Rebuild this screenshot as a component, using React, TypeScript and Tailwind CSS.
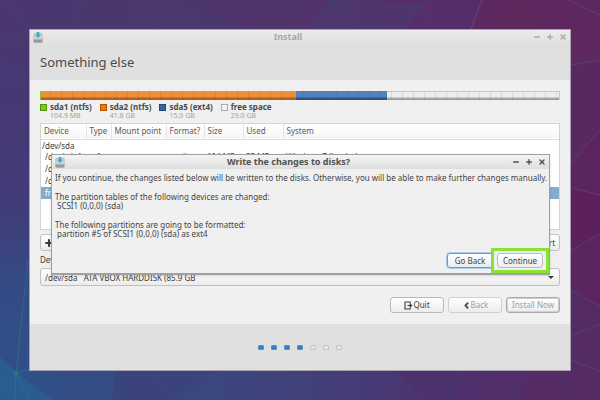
import React from 'react';
import { ChevronLeft, Minus, Plus, X } from 'lucide-react';

interface Partition {
  name: string;
  type: string;
  size: string;
  used: string;
  system: string;
  selected?: boolean;
}

const LEGEND = [
  { name: 'sda1 (ntfs)', size: '104.9 MB', color: 'bg-[#73d216]' },
  { name: 'sda2 (ntfs)', size: '41.8 GB', color: 'bg-[#f57900]' },
  { name: 'sda5 (ext4)', size: '15.0 GB', color: 'bg-[#3465a4]' },
  { name: 'free space', size: '29.0 GB', color: 'bg-[#f4f4f4]' },
];

const PARTITIONS: Partition[] = [
  { name: '/dev/sda1', type: 'ntfs', size: '104 MB', used: '35 MB', system: 'Windows 7 (loader)' },
  { name: '/dev/sda2', type: '', size: '', used: '', system: '' },
  { name: '/dev/sda5', type: '', size: '', used: '', system: '' },
  { name: 'free space', type: '', size: '', used: '', system: '', selected: true },
];

const STEPS = [true, true, true, true, false, false, false];

const BUTTON = 'flex items-center justify-center rounded-[3px] border bg-linear-to-b from-white to-[#ececec]';

function Wallpaper() {
  return (
    <svg
      className="absolute inset-0 h-full w-full"
      viewBox="0 0 600 400"
      preserveAspectRatio="none"
      aria-hidden="true"
    >
      <defs>
        <linearGradient id="base" x1="0" y1="0" x2="1" y2="0">
          <stop offset="0" stopColor="#47376f" />
          <stop offset="0.5" stopColor="#50346b" />
          <stop offset="0.9" stopColor="#5c2861" />
          <stop offset="1" stopColor="#5b245e" />
        </linearGradient>
        <linearGradient id="low" x1="0" y1="0" x2="1" y2="0">
          <stop offset="0" stopColor="#2e5189" />
          <stop offset="0.5" stopColor="#41417a" />
          <stop offset="0.8" stopColor="#502f6b" />
          <stop offset="1" stopColor="#552a66" />
        </linearGradient>
        <linearGradient id="left" x1="0" y1="0" x2="0" y2="1">
          <stop offset="0" stopColor="#4b3570" />
          <stop offset="0.5" stopColor="#423b77" />
          <stop offset="0.72" stopColor="#344b85" />
          <stop offset="1" stopColor="#2f5188" />
        </linearGradient>
      </defs>
      <rect width="600" height="400" fill="url(#base)" />
      <path d="M0 0H40V400H0Z" fill="url(#left)" />
      <path d="M29 365H580L600 400H0Z" fill="url(#low)" />
      <path d="M183 0H0V60L29 74V29H250Z" fill="#4c376f" opacity="0.5" />
      <path d="M330 0L422 5L406 29H310Z" fill="#4c3872" opacity="0.6" />
      <path d="M430 0H482L470 29H405Z" fill="#552f6d" opacity="0.7" />
      <path d="M482 0H600V60L571 65V29H470Z" fill="#60285f" opacity="0.8" />
      <path d="M571 65L600 60V130L571 163Z" fill="#592861" />
      <path d="M571 188L600 195V234L571 250Z" fill="#5c205d" />
      <path d="M571 290L600 305V400H520Z" fill="#552b65" />
      <path d="M0 358L16 373L50 400H0Z" fill="#295c91" />
      <path d="M116 371H214L178 400H112Z" fill="#3b437d" />
      <path d="M397 371H460L450 400H425Z" fill="#4c316d" />
      <g fill="none" stroke="#3b4779" strokeWidth="1" opacity="0.6">
        <path d="M0 62L28 75M6 0L30 32M80 0L73 29M330 0L312 29M330 0L346 29M330 0L422 5L431 0M422 5L406 29M422 5L429 29" />
        <path d="M482 0L471 29" stroke="#54619a" />
        <path d="M568 0L600 15M571 65L600 60M571 163L600 130M571 188L600 195M571 250L600 234M571 290L600 306M571 336L600 324M571 360L600 371" stroke="#4d5488" />
        <path d="M116 371L112 400M145 371L178 400M213 371V400M397 371L398 400M460 371L448 400M522 371L514 400M556 371L571 400" />
      </g>
      <g fill="none" stroke="#267c93" strokeWidth="1" opacity="0.55">
        <path d="M16 373L28 260M16 373L0 358M16 373L0 390M16 373L15 400M16 373L29 400M16 373L52 400M16 373L29 369" />
      </g>
      <circle cx="16" cy="373" r="2" fill="#20858f" opacity="0.6" />
    </svg>
  );
}

function InstallerIcon() {
  return (
    <svg className="h-[11px] w-[10px]" viewBox="0 0 10 11" aria-hidden="true">
      <rect x="0.6" y="1" width="8.800" height="9.500" rx="1.400" fill="#d0d0d0" stroke="#b4b4b4" strokeWidth="0.5" />
      <path d="M.6 7.400h8.800v1.900q0 1.300-1.300 1.300H1.900Q.6 10.600.6 9.300Z" fill="#989898" />
      <path d="M3.700 0h2.600v2.700h1.700L5 5.900 2 2.700h1.700Z" fill="#38a9da" />
    </svg>
  );
}

function QuitIcon() {
  return (
    <svg className="h-[9px] w-[9px]" viewBox="0 0 9 9" fill="none" stroke="#3c3c3c" strokeWidth="1.100" aria-hidden="true">
      <path d="M6.200 2.500V1H1v7h5.200V6.500" />
      <path d="M3.500 4.500h4.200" />
      <path d="M6 2.600L8.200 4.500L6 6.400Z" fill="#3c3c3c" strokeWidth="0.500" />
    </svg>
  );
}

function TitleBar({ title, dimmed = false }: { title: string; dimmed?: boolean }) {
  return (
    <div
      className={`grid h-[14px] shrink-0 grid-cols-[12px_1fr_36px] items-center px-[3px] ${
        dimmed
          ? 'bg-linear-to-b from-[#ececec] to-[#e0e0e0] text-[#a8a8a8]'
          : 'bg-linear-to-b from-[#f4f4f4] to-[#dedede] text-[#505050]'
      }`}
    >
      <InstallerIcon />
      <h2 className="text-center text-[9px] leading-3 font-bold">{title}</h2>
      <div className="flex items-center justify-end gap-[5px]">
        <button aria-label="Minimize"><Minus className="h-2 w-2" strokeWidth={4} /></button>
        <button aria-label="Maximize"><Plus className="h-2 w-2" strokeWidth={4} /></button>
        <button aria-label="Close"><X className="h-2 w-2" strokeWidth={4} /></button>
      </div>
    </div>
  );
}

function DiskBar() {
  return (
    <div className="relative flex h-[9px]">
      <div className="w-px bg-[#73d216]" />
      <div className="w-[49%] bg-linear-to-b from-[#ee9039] from-60% to-[#b0601a] to-85%" />
      <div className="w-[91px] bg-linear-to-b from-[#5583b9] from-60% to-[#2c5286] to-85%" />
      <div className="flex-1 border-t border-r border-[#c8c8c8] bg-linear-to-b from-[#ececec] from-60% to-[#9c9c9c] to-85%" />
      {/* Segment ticks */}
      <div className="absolute inset-0 bg-[repeating-linear-gradient(90deg,transparent_0_10px,rgba(0,0,0,0.08)_10px_11px)]" />
    </div>
  );
}

function PartitionTable() {
  return (
    <div className="mt-[3px] h-[107px] overflow-hidden border border-[#d4d4d4] bg-white">
      <table className="w-full table-fixed border-collapse text-left">
        <thead>
          <tr className="h-[15px] border-b border-[#dcdcdc] bg-linear-to-b from-white to-[#f6f6f6] text-[#5a5a5a]">
            <th className="w-[45px] border-r border-[#e4e4e4] p-0 pl-[3px] font-normal">Device</th>
            <th className="w-[25px] border-r border-[#e4e4e4] p-0 pl-[3px] font-normal">Type</th>
            <th className="w-[55px] border-r border-[#e4e4e4] p-0 pl-[3px] font-normal whitespace-nowrap">Mount point</th>
            <th className="w-[38px] border-r border-[#e4e4e4] p-0 pl-[3px] font-normal">Format?</th>
            <th className="w-[39px] border-r border-[#e4e4e4] p-0 pl-[3px] font-normal">Size</th>
            <th className="w-[40px] border-r border-[#e4e4e4] p-0 pl-[3px] font-normal">Used</th>
            <th className="p-0 pl-[3px] font-normal">System</th>
          </tr>
        </thead>
        <tbody>
          <tr className="h-[11px] leading-[11px]">
            <td className="p-0 pl-px" colSpan={7}>/dev/sda</td>
          </tr>
          {PARTITIONS.map((part) => (
            <tr
              key={part.name}
              className={`h-3 whitespace-nowrap ${part.selected ? 'bg-[#87abcb] text-white' : ''}`}
            >
              <td className="overflow-hidden p-0 pl-1">{part.name}</td>
              <td className="p-0 pl-[3px]">{part.type}</td>
              <td className="p-0" />
              <td className="p-0 text-center">
                <input
                  type="checkbox"
                  aria-label={`Format ${part.name}`}
                  className="mx-auto block h-2 w-2 appearance-none rounded-sm border border-[#bdbdbd] bg-[#f4f4f4]"
                />
              </td>
              <td className="p-0 pl-[3px]">{part.size}</td>
              <td className="p-0 pl-[3px]">{part.used}</td>
              <td className="p-0 pl-[3px]">{part.system}</td>
            </tr>
          ))}
        </tbody>
      </table>
    </div>
  );
}

function ConfirmDialog() {
  return (
    <div
      role="dialog"
      aria-label="Write the changes to disks?"
      className="absolute top-[124px] right-[20px] left-[21px] flex h-[121px] flex-col border border-b-2 border-[#a0a0a0] bg-[#f0f0f0] text-[#444444] shadow-sm"
    >
      <TitleBar title="Write the changes to disks?" />
      <div className="px-[3px] pt-1 leading-[9px] whitespace-nowrap">
        <p>
          If you continue, the changes listed below will be written to the disks. Otherwise, you will be able to make
          further changes manually.
        </p>
        <p className="mt-[10px]">The partition tables of the following devices are changed:</p>
        <p className="pl-0.5">SCSI1 (0,0,0) (sda)</p>
        <p className="mt-[10px]">The following partitions are going to be formatted:</p>
        <p className="pl-0.5">partition #5 of SCSI1 (0,0,0) (sda) as ext4</p>
      </div>
      <div className="mt-auto flex items-center justify-end">
        <button className={`${BUTTON} h-[15px] w-[46px] border-[#5b9bd8] ring-1 ring-[#a9cdee]`}>Go Back</button>
        <div className="relative -ml-[2px] border-[3px] border-[#8ae234] bg-[#f0f0f0] px-[3px] py-0.5">
          <button className={`${BUTTON} h-[15px] w-[46px] border-[#bcbcbc]`}>Continue</button>
        </div>
      </div>
    </div>
  );
}

export default function App() {
  return (
    <div className="relative flex min-h-screen bg-[#4b3570] p-[29px] font-['Noto_Sans','Open_Sans',sans-serif] text-[8px] leading-3 text-[#3c3c3c]">
      <Wallpaper />

      <main className="relative flex w-full flex-col overflow-hidden border border-[#a9a3ad] bg-[#f0f0f0]">
        <TitleBar title="Install" dimmed />
        <header className="h-9 bg-[#e0e0e0] px-[10px] pt-2">
          <h1 className="text-[13px] leading-5 text-[#4c4c4c]">Something else</h1>
        </header>

        <section className="flex flex-1 flex-col px-[10px] pt-[11px]">
          <DiskBar />

          <ul className="mt-[2px] flex gap-2">
            {LEGEND.map((item) => (
              <li key={item.name} className="flex gap-[3px]">
                <span className={`mt-[2px] h-[7px] w-[7px] border border-black/30 ${item.color}`} />
                <div>
                  <p className="leading-[10px] font-bold text-[#4a4a4a]">{item.name}</p>
                  <p className="text-[7px] leading-[8px] text-[#a0a0a0]">{item.size}</p>
                </div>
              </li>
            ))}
          </ul>

          <PartitionTable />

          <div className="mt-1 flex justify-between">
            <div className="flex">
              <button aria-label="Add partition" className={`${BUTTON} h-[17px] w-[18px] border-[#c0c0c0]`}>
                <Plus className="h-[10px] w-[10px]" strokeWidth={5} />
              </button>
              <button aria-label="Remove partition" className={`${BUTTON} h-[17px] w-[18px] border-[#c0c0c0]`}>
                <Minus className="h-[10px] w-[10px]" strokeWidth={5} />
              </button>
            </div>
            <button className={`${BUTTON} h-[17px] w-[34px] border-[#c0c0c0]`}>Revert</button>
          </div>

          <label htmlFor="boot-device" className="mt-[3px]">
            Device for boot
          </label>
          <div className="relative mt-[2px]">
            <select
              id="boot-device"
              className="block h-[18px] w-full appearance-none rounded-[3px] border border-[#c0c0c0] bg-linear-to-b from-white to-[#ececec] px-1 pt-px"
            >
              <option>{'/dev/sda\u00a0\u00a0 ATA VBOX HARDDISK (85.9 GB'}</option>
            </select>
            <svg className="pointer-events-none absolute top-2 right-[6px] h-[3px] w-[6px]" viewBox="0 0 6 3" aria-hidden="true">
              <path d="M0 0H6L3 3Z" fill="#3c3c3c" />
            </svg>
          </div>

          <div className="mt-[11px] mb-[11px] flex justify-end gap-1">
            <button className={`${BUTTON} h-4 w-[54px] border-[#b8b8b8]`}>
              <QuitIcon />
              Quit
            </button>
            <button disabled className={`${BUTTON} h-4 w-[54px] border-[#d0d0d0] from-[#f0f0f0] text-[#a0a0a0]`}>
              <ChevronLeft className="h-[9px] w-[9px] text-[#505050]" strokeWidth={5} />
              Back
            </button>
            <button disabled className={`${BUTTON} h-4 w-[54px] border-[#aaaaaa] from-[#f0f0f0] text-[#a0a0a0] ring-1 ring-[#d0d0d0] ring-inset`}>
              Install Now
            </button>
          </div>
        </section>

        <footer className="flex h-[46px] items-center justify-center gap-[7px] bg-[#e0e0e0]">
          {STEPS.map((done, i) => (
            <span
              key={i}
              className={`h-[5px] w-[6px] rounded-[1px] border ${
                done ? 'border-[#5b90bd] bg-[#3280c2]' : 'border-[#c2c2c2] bg-[#e6e6e6]'
              }`}
            />
          ))}
        </footer>

        <ConfirmDialog />
      </main>
    </div>
  );
}
